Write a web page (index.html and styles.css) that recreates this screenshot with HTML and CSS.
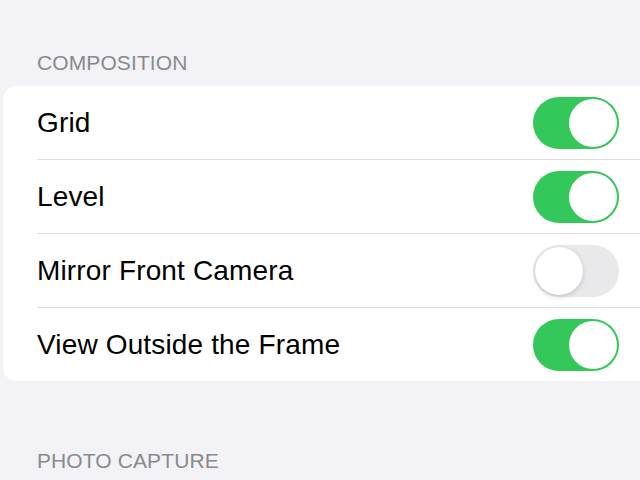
FILE: index.html
```html
<!DOCTYPE html>
<html>
<head>
<meta charset="utf-8">
<link rel="stylesheet" href="styles.css">
</head>
<body>
<div class="page">
  <div class="section-header first">COMPOSITION</div>
  <div class="card">
    <div class="row"><span class="label">Grid</span><span class="toggle on"><span class="knob"></span></span></div>
    <div class="row"><span class="label">Level</span><span class="toggle on"><span class="knob"></span></span></div>
    <div class="row"><span class="label">Mirror Front Camera</span><span class="toggle off"><span class="knob"></span></span></div>
    <div class="row last"><span class="label">View Outside the Frame</span><span class="toggle on"><span class="knob"></span></span></div>
  </div>
  <div class="section-header second">PHOTO CAPTURE</div>
</div>
</body>
</html>
```

FILE: styles.css
```css
html, body {
  margin: 0;
  padding: 0;
  width: 640px;
  height: 480px;
  overflow: hidden;
  background: #f2f2f7;
  font-family: "Liberation Sans", Arial, sans-serif;
}
.page {
  display: flex;
  flex-direction: column;
  padding-top: 50px;
}
.section-header {
  font-size: 21px;
  line-height: 25px;
  color: #8a8a8e;
  padding-left: 37px;
  letter-spacing: 0.1px;
}
.section-header.second {
  margin-top: 67px;
}
.card {
  margin-top: 11px;
  margin-left: 3px;
  margin-right: -20px;
  background: #ffffff;
  border-radius: 14px;
  padding-left: 34px;
  display: flex;
  flex-direction: column;
}
.row {
  height: 73px;
  display: flex;
  align-items: center;
  justify-content: space-between;
  border-bottom: 1px solid #dedee2;
  padding-right: 41px;
}
.row.last {
  border-bottom: none;
}
.label {
  font-size: 28px;
  letter-spacing: 0.15px;
  color: #000;
}
.toggle {
  position: relative;
  width: 86px;
  height: 52px;
  border-radius: 26px;
  flex-shrink: 0;
}
.toggle.on {
  background: #34c759;
}
.toggle.off {
  background: #e9e9eb;
}
.knob {
  position: absolute;
  top: 2px;
  width: 48px;
  height: 48px;
  border-radius: 50%;
  background: #fff;
}
.toggle.on .knob {
  right: 2px;
}
.toggle.off .knob {
  left: 2px;
  box-shadow: 0 2px 5px rgba(0,0,0,0.15), 0 0 1px rgba(0,0,0,0.12);
}
```
